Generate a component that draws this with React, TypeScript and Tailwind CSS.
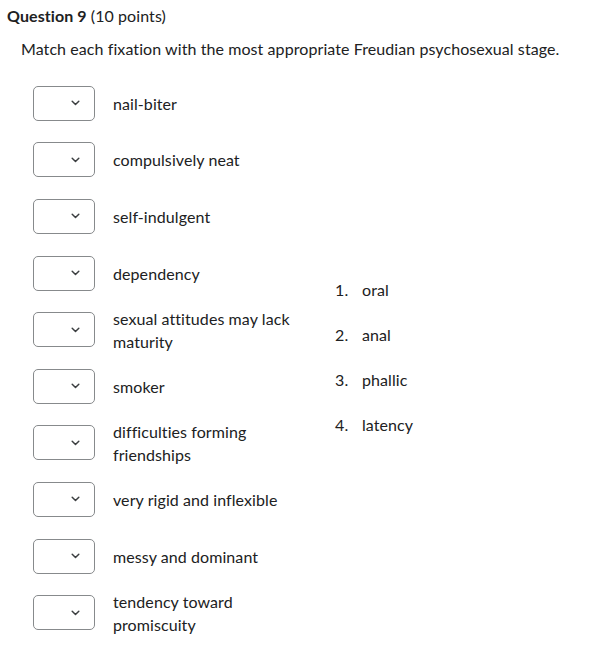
import React from 'react';

const fixations: string[] = [
  'nail-biter',
  'compulsively neat',
  'self-indulgent',
  'dependency',
  'sexual attitudes may lack maturity',
  'smoker',
  'difficulties forming friendships',
  'very rigid and inflexible',
  'messy and dominant',
  'tendency toward promiscuity',
];

const stages: string[] = ['oral', 'anal', 'phallic', 'latency'];

const Chevron: React.FC = () => (
  <svg width="9" height="6" viewBox="0 0 9 6" fill="none">
    <path d="M1.2 1.3l3.3 3.2 3.3-3.2" stroke="#3c3f41" strokeWidth="1.5" strokeLinecap="round" strokeLinejoin="round" />
  </svg>
);

export default function App() {
  return (
    <div className="w-[606px] h-[651px] bg-white text-[#202122] font-['Lato','Noto_Sans',sans-serif] text-[16px] tracking-[0.08px] [font-variant-ligatures:none]">
      <div className="pl-[7px] pt-[4px] leading-[24px]">
        <span className="font-bold">Question 9</span> (10 points)
      </div>
      <div className="pl-[21px] pt-[9px] leading-[24px]">
        Match each fixation with the most appropriate Freudian psychosexual stage.
      </div>
      <div className="flex pt-[14px]">
        <div className="pl-[33px] w-[335px] flex flex-col">
          {fixations.map((f) => (
            <div key={f} className="h-[56.6px] flex items-center">
              <div className="w-[62px] h-[35px] shrink-0 border border-[#878a8c] rounded-[5px] flex items-center justify-end pr-[14px]">
                <Chevron />
              </div>
              <div className="ml-[18px] w-[190px] leading-[23px]">{f}</div>
            </div>
          ))}
        </div>
        <div className="flex flex-col justify-center">
          {stages.map((s, i) => (
            <div key={s} className="h-[45px] flex items-center">
              <span className="w-[27px]">{i + 1}.</span>
              <span>{s}</span>
            </div>
          ))}
        </div>
      </div>
    </div>
  );
}
